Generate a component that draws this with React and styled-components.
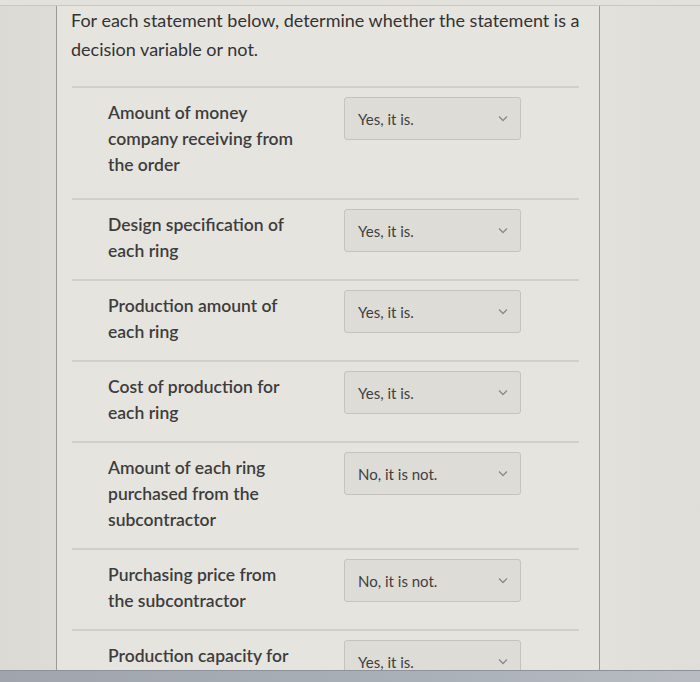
import React from "react";
import styled, { createGlobalStyle } from "styled-components";

const Global = createGlobalStyle`
  html, body { margin: 0; padding: 0; }
  body {
    background: #e1dfda;
    font-family: Lato, "Open Sans", "Liberation Sans", sans-serif;
    overflow: hidden;
  }
`;

const Screen = styled.div`
  width: 700px;
  height: 682px;
  position: relative;
  overflow: hidden;
  background: linear-gradient(90deg, #dcdad5 0%, #e4e2dd 40%, #e6e4df 70%, #e0ded9 100%);
`;

const TopRule = styled.div`
  height: 5px;
  border-bottom: 1px solid #c9c7c2;
  background: #e3e1dc;
`;

const Panel = styled.div`
  margin-left: 56px;
  width: 544px;
  height: 676px;
  border-left: 1px solid #9c9a96;
  border-right: 1px solid #9c9a96;
  background: #e6e4df;
  box-sizing: border-box;
`;

const Prompt = styled.p`
  margin: 0;
  padding: 0 0 0 14px;
  font-size: 18px;
  line-height: 29px;
  color: #333;
  font-weight: 400;
  width: 525px;
`;

const List = styled.div`
  margin-top: 22px;
  margin-left: 15px;
  margin-right: 20px;
`;

const Row = styled.div`
  display: grid;
  grid-template-columns: 236px 177px;
  align-items: start;
  border-top: 2px solid #d1cfca;
  padding: 12px 0 ${(p) => (p.$first ? 20 : 15)}px 36px;
`;

const Label = styled.div`
  font-size: 17.5px;
  line-height: 26px;
  font-weight: 600;
  color: #3d3d3d;
  width: 192px;
`;

const Select = styled.div`
  display: flex;
  align-items: center;
  justify-content: space-between;
  height: 43px;
  box-sizing: border-box;
  padding: 0 12px 0 13px;
  margin-top: -3px;
  background: #dedcd7;
  border: 1px solid #c5c3be;
  border-radius: 3px;
  font-size: 15px;
  color: #404040;
`;

const Chevron = () => (
  <svg width="10" height="7" viewBox="0 0 10 7">
    <path d="M1 1.5 L5 5.5 L9 1.5" fill="none" stroke="#8a8a8a" strokeWidth="1.3" />
  </svg>
);

const Taskbar = styled.div`
  position: absolute;
  left: 0;
  right: 0;
  bottom: 0;
  height: 11px;
  background: linear-gradient(90deg, #9fa4ad 0%, #aab0b8 60%, #b8bcc2 100%);
  border-top: 1px solid #8e939b;
`;

const rows = [
  { label: "Amount of money company receiving from the order", value: "Yes, it is." },
  { label: "Design specification of each ring", value: "Yes, it is." },
  { label: "Production amount of each ring", value: "Yes, it is." },
  { label: "Cost of production for each ring", value: "Yes, it is." },
  { label: "Amount of each ring purchased from the subcontractor", value: "No, it is not." },
  { label: "Purchasing price from the subcontractor", value: "No, it is not." },
  { label: "Production capacity for each ring", value: "Yes, it is." },
];

export default function App() {
  return (
    <Screen>
      <Global />
      <TopRule />
      <Panel>
        <Prompt>
          For each statement below, determine whether the statement is a decision variable or not.
        </Prompt>
        <List>
          {rows.map((r, i) => (
            <Row key={r.label} $first={i === 0}>
              <Label>{r.label}</Label>
              <Select>
                <span>{r.value}</span>
                <Chevron />
              </Select>
            </Row>
          ))}
        </List>
      </Panel>
      <Taskbar />
    </Screen>
  );
}
